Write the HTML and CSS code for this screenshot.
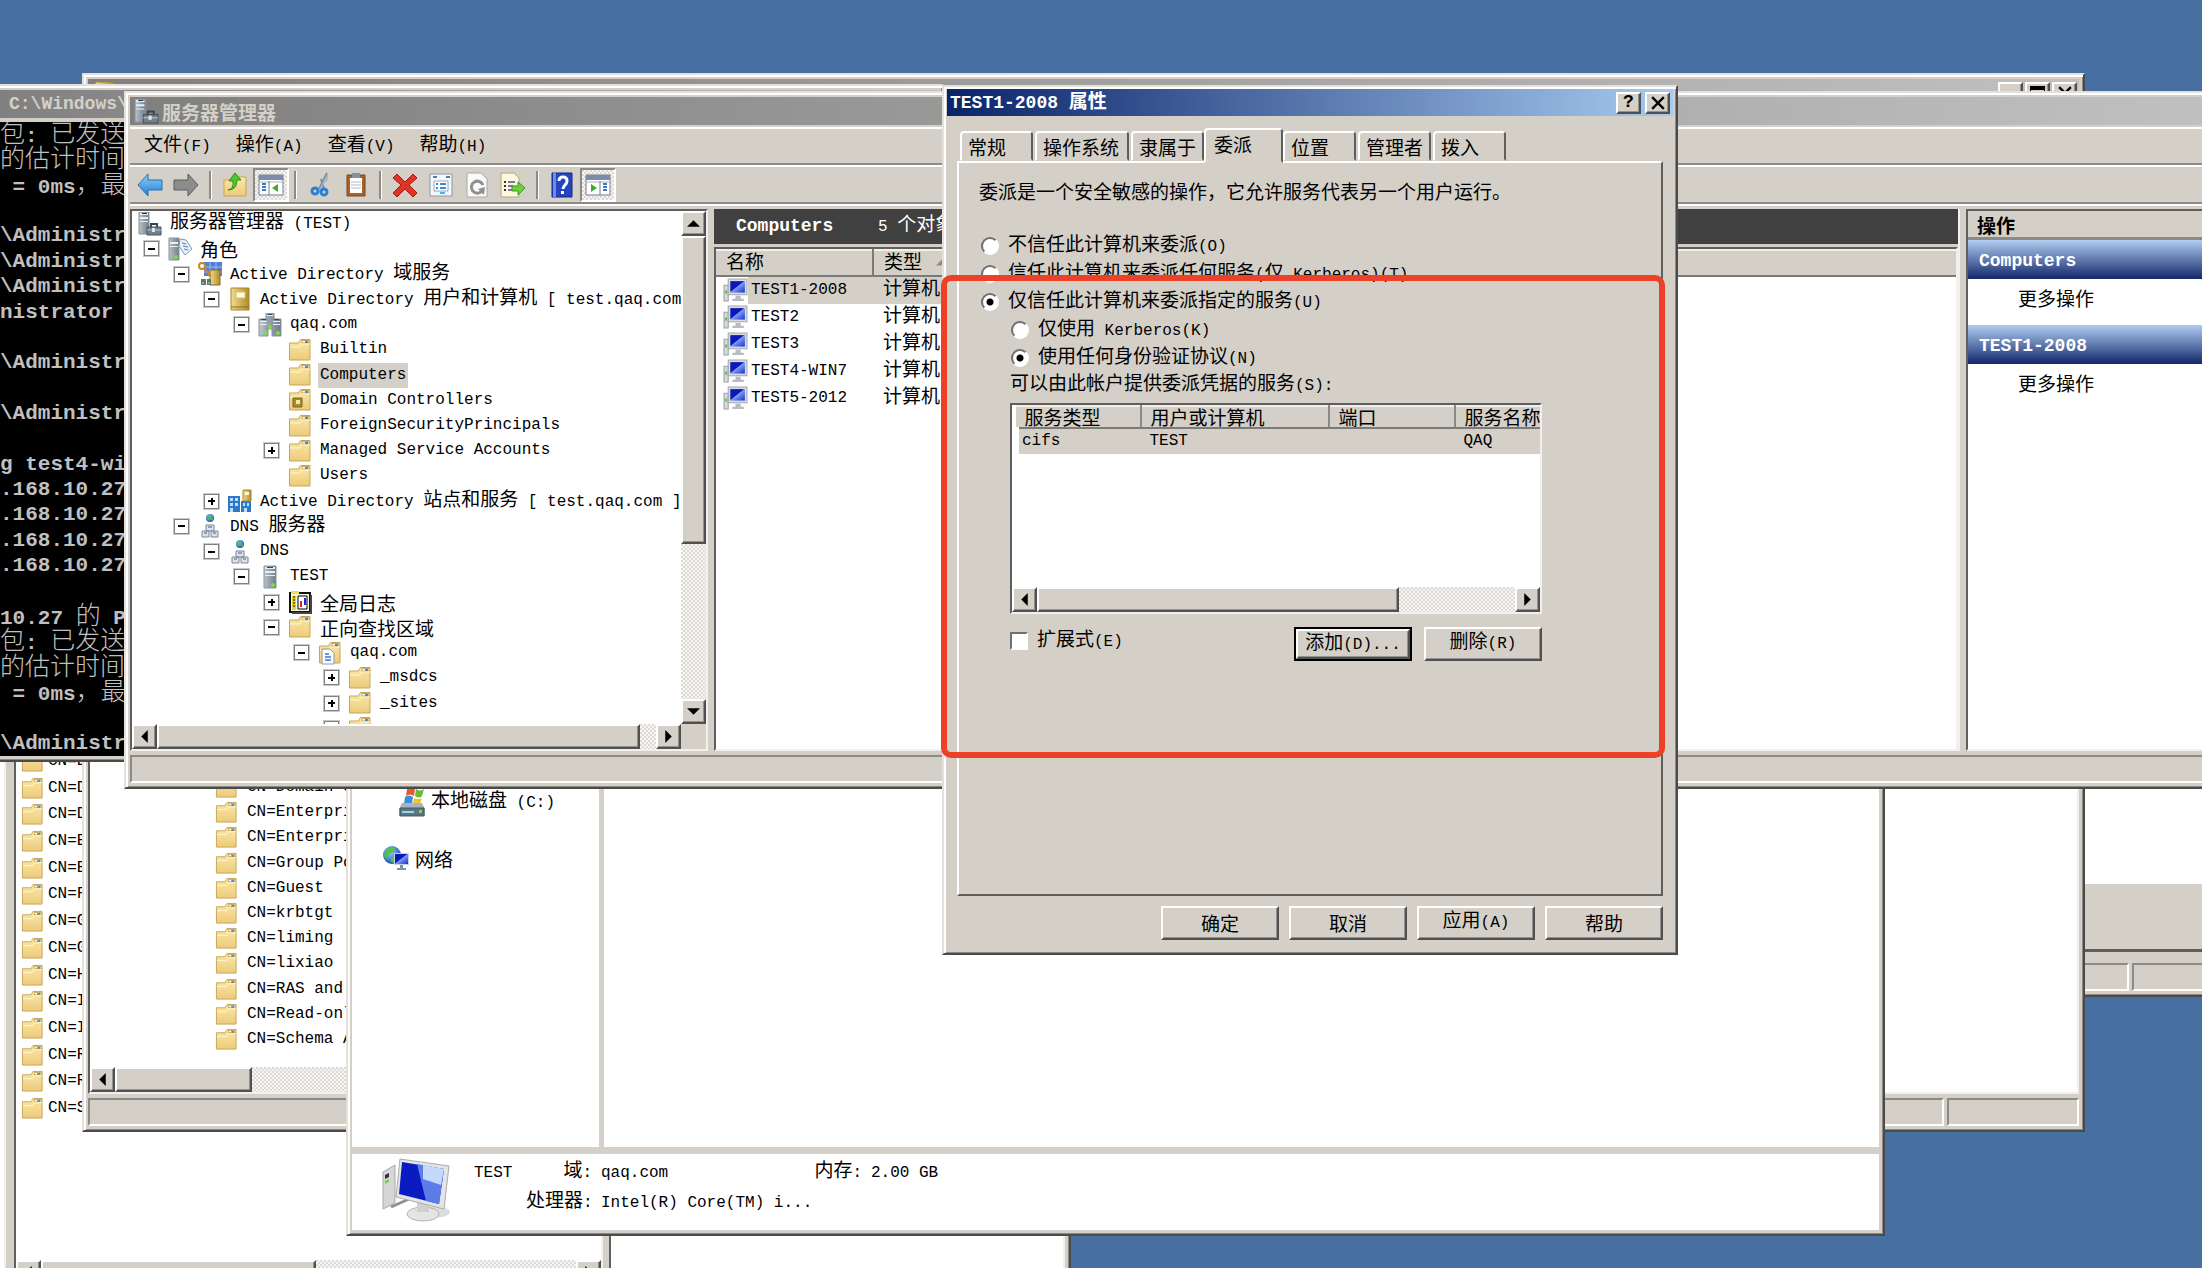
FILE: index.html
```html
<!DOCTYPE html>
<html lang="zh-CN">
<head>
    <meta charset="UTF-8">
    <meta name="viewport" content="width=device-width, initial-scale=1.0">
    <title>TEST1-2008 属性</title>
    <link rel="stylesheet" href="styles.css">
</head>
<body>
    <!-- icon set -->
    <svg class="defs" aria-hidden="true">
        <defs>
            <linearGradient id="gFolder" x1="0" y1="0" x2="0" y2="1"><stop offset="0" stop-color="#fbe8a8"/><stop offset="1" stop-color="#eccb7a"/></linearGradient>
            <linearGradient id="gServer" x1="0" y1="0" x2="1" y2="0"><stop offset="0" stop-color="#b9c4cc"/><stop offset="1" stop-color="#6f7d88"/></linearGradient>
            <linearGradient id="gScreen" x1="0" y1="0" x2="1" y2="1"><stop offset="0" stop-color="#0a18b8"/><stop offset=".45" stop-color="#0a18b8"/><stop offset=".5" stop-color="#7f9af0"/><stop offset="1" stop-color="#1230d0"/></linearGradient>
            <linearGradient id="gBlue" x1="0" y1="0" x2="0" y2="1"><stop offset="0" stop-color="#8fd0fa"/><stop offset="1" stop-color="#1f7fd4"/></linearGradient>
            <linearGradient id="gGold" x1="0" y1="0" x2="1" y2="0"><stop offset="0" stop-color="#f0dc90"/><stop offset="1" stop-color="#b08c28"/></linearGradient>
            <radialGradient id="gGlobe" cx=".4" cy=".35" r=".7"><stop offset="0" stop-color="#8fd0ff"/><stop offset="1" stop-color="#1448a8"/></radialGradient>
        </defs>
        <symbol id="folder" viewBox="0 0 24 24">
            <path d="M1.500 5h9l2-3.500h9.500v20.500h-20.500z" fill="url(#gFolder)" stroke="#c9a553"/>
            <path d="M14 2.500h7v2.500h-7z" fill="#fff" stroke="#c9a553"/><path d="M17 3h3v2h-3z" fill="#3f8fd8"/>
            <path d="M2 9h10l2-3h8" fill="none" stroke="#fff6d0"/>
        </symbol>
        <symbol id="folder-dc" viewBox="0 0 24 24">
            <use href="#folder"/><path d="M5 10h9v9h-9z" fill="#a88a30" stroke="#7c6418"/><path d="M8 12h4v4h-4z" fill="#f4e6a8"/>
        </symbol>
        <symbol id="folder-doc" viewBox="0 0 24 24">
            <use href="#folder"/><path d="M4 8h8l4 4v11h-12z" fill="#f8fbff" stroke="#8a9ab0"/><path d="M7 13h4M7 16h6M7 19h6" stroke="#3a78c8" stroke-width="1.500"/>
        </symbol>
        <symbol id="server" viewBox="0 0 24 24">
            <path d="M6 1h12v22h-12z" fill="url(#gServer)" stroke="#8a959e"/><path d="M7 2h10v2h-10zM7 6h10v2h-10zM7 10h10v1h-10z" fill="#e8eef2"/>
            <path d="M9 2h6v1h-6z" fill="#1c4a70"/><circle cx="15" cy="20" r="2" fill="#7be03a"/>
        </symbol>
        <symbol id="server-box" viewBox="0 0 24 24">
            <path d="M1 0h10v22h-10z" fill="url(#gServer)" stroke="#8a959e"/><path d="M2 1h8v2h-8zM2 5h8v2h-8zM2 9h8v1h-8z" fill="#e8eef2"/><path d="M4 1h5v1h-5z" fill="#1c3a60"/>
            <path d="M13 15v-3h6v3" fill="none" stroke="#3c4650" stroke-width="2"/><path d="M9 15h14v8h-14z" fill="#72808c" stroke="#49545e"/><path d="M9 18h14" stroke="#b8c4cc"/><path d="M14 16h3v4h-3z" fill="#dfe6ea"/>
        </symbol>
        <symbol id="roles" viewBox="0 0 24 24">
            <path d="M1 1h10v22h-10z" fill="url(#gServer)" stroke="#8a959e"/><path d="M2 5h8v2h-8zM2 9h8v1h-8z" fill="#e8eef2"/><circle cx="8" cy="20" r="2" fill="#7be03a"/>
            <path d="M12 2l6 1 6 9-7 6-6-9z" fill="#e8f1fa" stroke="#7d99b8"/><path d="M14 6l4 1M15 9l5 1M16 12l4 1" stroke="#4d7fb8"/>
        </symbol>
        <symbol id="adds" viewBox="0 0 24 24">
            <path d="M6 0h18v14h-18z" fill="#4f7fd8"/><path d="M6 5h18M6 10h18M12 0v14M18 0v14" stroke="#9dbdf2"/>
            <path d="M12 8h10v15h-10z" fill="url(#gGold)" stroke="#8c6c18"/><circle cx="4" cy="4" r="3" fill="none" stroke="#c88a20" stroke-width="2"/><path d="M6 6l7 8" stroke="#c88a20" stroke-width="2"/>
            <path d="M3 17h5v6h-5zM9 17h4v6h-4z" fill="#60707c"/><path d="M4 20h2v2h-2zM10 20h2v2h-2z" fill="#66d040"/>
        </symbol>
        <symbol id="book" viewBox="0 0 24 24">
            <path d="M3 1h18v22h-18z" fill="url(#gGold)" stroke="#a88428"/><path d="M8 5h9v6h-9z" fill="#fffbe0" stroke="#d8c070"/><path d="M3 20h18" stroke="#8c6c18"/>
        </symbol>
        <symbol id="domain" viewBox="0 0 24 24">
            <path d="M8 0h8v16h-8zM1 6h9v17h-9zM14 6h9v17h-9z" fill="url(#gServer)" stroke="#8a959e"/>
            <path d="M2 8h7v1h-7zM2 11h7v1h-7zM15 8h7v1h-7zM15 11h7v1h-7zM9 2h6v1h-6z" fill="#e8eef2"/><path d="M10 1h4v1h-4zM3 6h5v1h-5zM16 6h5v1h-5z" fill="#1c4a70"/>
            <circle cx="7" cy="20" r="2" fill="#7be03a"/><circle cx="20" cy="20" r="2" fill="#7be03a"/><circle cx="12" cy="14" r="2" fill="#7be03a"/>
        </symbol>
        <symbol id="sites" viewBox="0 0 24 24">
            <path d="M0 7h12v16h-12zM13 12h10v11h-10z" fill="#2d78cc"/><path d="M2 9h3v3h-3zM7 9h3v3h-3zM2 14h3v3h-3zM7 14h3v3h-3zM2 19h3v4h-3zM15 14h2v3h-2zM19 14h2v3h-2zM16 19h3v4h-3z" fill="#bfe0fa"/>
            <path d="M15 1h8v11h-8z" fill="url(#gGold)" stroke="#a88428"/><path d="M17 3h4v3h-4z" fill="#fff8d0"/>
        </symbol>
        <symbol id="dns" viewBox="0 0 24 24">
            <circle cx="12" cy="4" r="4" fill="url(#gGlobe)"/><path d="M9 2l3-1 1 3-3 2zM13 5l2-1v3z" fill="#4fc040"/>
            <path d="M8 11h8v6h-8zM4 17h7v6h-7zM13 17h7v6h-7z" fill="#dde2ea" stroke="#7c8698"/><path d="M10 13h4M6 19h3M15 19h3" stroke="#4a5a80"/>
        </symbol>
        <symbol id="log" viewBox="0 0 24 24">
            <path d="M2 3h20v19h-20z" fill="#f4f4e8" stroke="#111" stroke-width="2"/><path d="M3 1h8v3h-8z" fill="#f0e040"/><path d="M4 6h4v14h-4z" fill="#e8d820"/><path d="M5 7h2M5 10h2M5 13h2M5 16h2" stroke="#000"/>
            <path d="M10 6h9v13h-9z" fill="#fff" stroke="#000"/><path d="M12 11h2v6h-2z" fill="#e02020"/><path d="M16 8h2v7h-2z" fill="#2020e0"/><path d="M23 5v18h-19" fill="none" stroke="#444" stroke-width="2"/>
        </symbol>
        <symbol id="pc" viewBox="0 0 24 24">
            <path d="M1 7h4v15h-4z" fill="#d8dce0" stroke="#9aa0a6"/><path d="M2 12h2v3h-2z" fill="#58c830"/>
            <path d="M5 1h18v15h-18z" fill="#d8dce0" stroke="#a4a8ae"/><path d="M7 3h14v11h-14z" fill="url(#gScreen)"/><path d="M12 17h5v3h3v2h-11v-2h3z" fill="#b8bcc2"/>
        </symbol>
        <symbol id="disk" viewBox="0 0 26 32">
            <path d="M8 3q4-3 8 0l-1 7q-4-3-8 0z" fill="#e8582c"/><path d="M17 3q4 3 8 0l-2 7q-3 3-7 0z" fill="#6cb83c"/><path d="M6 11q4-3 8 0l-1 7q-4-2-8 0z" fill="#3c8ce0"/><path d="M15 12q4 2 8 0l-2 6q-4 2-7 0z" fill="#f4c030"/>
            <path d="M3 17h20l3 6v7h-26v-7z" fill="#a8b4bc"/><path d="M1 22h24v8h-24z" fill="#5c7480" stroke="#485860"/><path d="M3 25h12v2h-12z" fill="#90dcf0"/><path d="M20 24h3v3h-3z" fill="#70e040"/>
        </symbol>
        <symbol id="network" viewBox="0 0 26 26">
            <circle cx="9" cy="10" r="9" fill="url(#gGlobe)"/><path d="M3 5q5-5 9-2l-3 5-4 2-1 4-3-3zM8 13l5-1-2 6-3-1z" fill="#58c048"/>
            <path d="M11 8h15v12h-15z" fill="#c8d0dc"/><path d="M12 9h13v10h-13z" fill="url(#gScreen)"/><path d="M17 20h3v3h3v2h-9v-2h3z" fill="#7c90b0"/>
        </symbol>
        <symbol id="bigpc" viewBox="0 0 70 64">
            <ellipse cx="52" cy="54" rx="17" ry="6" fill="#dcdcdc"/><path d="M2 14l12-7v38l-12 6z" fill="#d4d6d8" stroke="#a8a8a8"/><path d="M4 17l4-2v4l-4 2z" fill="#333"/><path d="M4 23l4-2v3l-4 2z" fill="#6cd83c"/><path d="M10 49l18-8" stroke="#909090" stroke-width="3"/>
            <ellipse cx="42" cy="56" rx="16" ry="7" fill="#e4e4e4" stroke="#b4b4b4"/><path d="M36 42h12v12h-12z" fill="#d0d0d0"/>
            <path d="M19 1l49 7-5 43-48-12z" fill="#e2e4e6" stroke="#acacac"/><path d="M21 4l42 7-5 35-40-10z" fill="#0a1cc0"/><path d="M36 6l27 5-5 35-13-3z" fill="#5c7ce8"/><path d="M42 7l21 4-3 16-18-6z" fill="#c4d8fc"/>
        </symbol>
        <symbol id="back" viewBox="0 0 26 26"><path d="M1 13l10-11v6h14v10h-14v6z" fill="url(#gBlue)" stroke="#2a6cb0"/></symbol>
        <symbol id="forward" viewBox="0 0 26 26"><path d="M25 13l-10-11v6h-14v10h14v6z" fill="#8c8c8c" stroke="#5c5c5c"/></symbol>
        <symbol id="up" viewBox="0 0 26 26"><path d="M2 8h9l2-3h11v19h-22z" fill="url(#gFolder)" stroke="#c9a553"/><path d="M6 18q6-1 5-9h-4l6-8 6 7h-4q0 10-9 10z" fill="#4cc830" stroke="#2c8c1c"/></symbol>
        <symbol id="pane-left" viewBox="0 0 26 26"><path d="M1 3h24v20h-24z" fill="#fff" stroke="#707c90"/><path d="M1 3h24v5h-24z" fill="#7c8cac"/><path d="M2 10h23" stroke="#a8b4c8"/><path d="M11 9v14" stroke="#707c90"/><path d="M4 12h4M4 15h4M4 18h4" stroke="#3c78c0" stroke-width="2"/><path d="M20 12v8l-6-4z" fill="#3cac28"/></symbol>
        <symbol id="pane-right" viewBox="0 0 26 26"><path d="M1 3h24v20h-24z" fill="#fff" stroke="#707c90"/><path d="M1 3h24v5h-24z" fill="#7c8cac"/><path d="M2 10h23" stroke="#a8b4c8"/><path d="M15 9v14" stroke="#707c90"/><path d="M18 12h4M18 15h4M18 18h4" stroke="#3c78c0" stroke-width="2"/><path d="M6 12v8l6-4z" fill="#3cac28"/></symbol>
        <symbol id="cut" viewBox="0 0 26 26"><path d="M20 1l-8 16M14 7l3 10" stroke="#7890a4" stroke-width="2"/><path d="M21 1v7l-8 8z" fill="#a8bccc"/><circle cx="8" cy="19" r="3" fill="none" stroke="#2a80d8" stroke-width="3"/><circle cx="17" cy="20" r="3" fill="none" stroke="#2a80d8" stroke-width="3"/></symbol>
        <symbol id="paste" viewBox="0 0 26 26"><path d="M4 3h18v21h-18z" fill="#a4622c" stroke="#7c441c"/><path d="M7 6h12v15h-12z" fill="#fff"/><path d="M9 1h8v5h-8z" fill="#889098"/><path d="M8 10h10M8 13h10M8 16h10" stroke="#b4bcc8"/></symbol>
        <symbol id="delete" viewBox="0 0 26 26"><path d="M5 2l8 8 8-8 4 4-8 7 8 8-4 4-8-8-8 8-4-4 8-8-8-7z" fill="#e03428" stroke="#a81810"/></symbol>
        <symbol id="props" viewBox="0 0 26 26"><path d="M2 2h22v22h-22z" fill="#f4f8fc" stroke="#8898a8"/><path d="M5 5h4M18 5h4" stroke="#4c7cb0" stroke-width="2"/><path d="M6 9h14v10h-14z" fill="#fff" stroke="#98a8b8"/><path d="M8 12h2M12 12h6M8 16h2M12 16h6" stroke="#3c88d0" stroke-width="2"/><path d="M12 21h5" stroke="#40b8e8" stroke-width="2"/></symbol>
        <symbol id="refresh" viewBox="0 0 26 26"><path d="M3 1h14l6 6v18h-20z" fill="#fafafa" stroke="#a8a8a8"/><path d="M18 19a6 6 0 1 1 1-6" fill="none" stroke="#909090" stroke-width="3"/><path d="M14 17l7-2-1 8z" fill="#909090"/></symbol>
        <symbol id="export" viewBox="0 0 26 26"><path d="M1 1h13l5 5v19h-18z" fill="#fcf8dc" stroke="#b0a878"/><path d="M4 10h2M4 14h2M4 18h2" stroke="#333" stroke-width="2"/><path d="M8 10h7M8 14h5M8 18h5" stroke="#7878a0" stroke-width="2"/><path d="M12 14h6v-4l7 6-7 7v-4h-6z" fill="#6cd040" stroke="#3c9820"/></symbol>
        <symbol id="help" viewBox="0 0 26 26"><path d="M3 1h20v24h-20z" fill="#2444c4" stroke="#14287c"/><path d="M4 1h3v24h-3z" fill="#6c8cf0"/><path d="M10 9q0-4 4-4t4 4q0 2-2 4t-2 4" fill="none" stroke="#fff" stroke-width="3"/><path d="M12 19h3v3h-3z" fill="#fff"/></symbol>
        <symbol id="tri-left" viewBox="0 0 12 12"><path d="M9 0v12l-6-6z"/></symbol>
        <symbol id="tri-right" viewBox="0 0 12 12"><path d="M3 0v12l6-6z"/></symbol>
        <symbol id="tri-up" viewBox="0 0 12 12"><path d="M0 9h12l-6-6z"/></symbol>
        <symbol id="tri-down" viewBox="0 0 12 12"><path d="M0 3h12l-6 6z"/></symbol>
        <symbol id="cross" viewBox="0 0 12 12"><path d="M1 1l10 10M11 1l-10 10" stroke="#000" stroke-width="2"/></symbol>
    </svg>

    <main class="desktop">
        <!-- attribute editor, bottom of the stack -->
        <section class="window adsi-list">
            <div class="pane side"></div>
            <div class="pane mid">
                <ul class="entries wide">
                    <li><svg><use href="#folder"/></svg>CN=D</li>
                    <li><svg><use href="#folder"/></svg>CN=D</li>
                    <li><svg><use href="#folder"/></svg>CN=D</li>
                    <li><svg><use href="#folder"/></svg>CN=E</li>
                    <li><svg><use href="#folder"/></svg>CN=E</li>
                    <li><svg><use href="#folder"/></svg>CN=F</li>
                    <li><svg><use href="#folder"/></svg>CN=G</li>
                    <li><svg><use href="#folder"/></svg>CN=G</li>
                    <li><svg><use href="#folder"/></svg>CN=H</li>
                    <li><svg><use href="#folder"/></svg>CN=I</li>
                    <li><svg><use href="#folder"/></svg>CN=I</li>
                    <li><svg><use href="#folder"/></svg>CN=R</li>
                    <li><svg><use href="#folder"/></svg>CN=R</li>
                    <li><svg><use href="#folder"/></svg>CN=S</li>
                </ul>
                <div class="hscroll">
                    <button type="button" class="arrow" aria-label="向左"><svg><use href="#tri-left"/></svg></button>
                    <div class="thumb w-mid"></div>
                    <div class="track"></div>
                    <button type="button" class="arrow" aria-label="向右"><svg><use href="#tri-right"/></svg></button>
                </div>
            </div>
            <div class="pane rest"></div>
        </section>

        <section class="window policy">
            <div class="blank"></div>
            <div class="strip"></div>
            <div class="status"><span class="cell grow"></span><span class="cell tail"></span></div>
        </section>

        <section class="window adsi-tree">
            <div class="titlebar">
                <svg class="ticon"><use href="#book"/></svg>
                <div class="controls">
                    <button type="button" aria-label="最小化"></button>
                    <button type="button" aria-label="最大化"><i class="max"></i></button>
                    <button type="button" aria-label="关闭"><svg><use href="#cross"/></svg></button>
                </div>
            </div>
            <div class="pane body">
                <ul class="entries">
                    <li><svg><use href="#folder"/></svg>CN=Domain Users</li>
                    <li><svg><use href="#folder"/></svg>CN=Enterprise Admins</li>
                    <li><svg><use href="#folder"/></svg>CN=Enterprise Read</li>
                    <li><svg><use href="#folder"/></svg>CN=Group Policy</li>
                    <li><svg><use href="#folder"/></svg>CN=Guest</li>
                    <li><svg><use href="#folder"/></svg>CN=krbtgt</li>
                    <li><svg><use href="#folder"/></svg>CN=liming</li>
                    <li><svg><use href="#folder"/></svg>CN=lixiao</li>
                    <li><svg><use href="#folder"/></svg>CN=RAS and IAS</li>
                    <li><svg><use href="#folder"/></svg>CN=Read-only</li>
                    <li><svg><use href="#folder"/></svg>CN=Schema Admins</li>
                </ul>
                <div class="hscroll short">
                    <button type="button" class="arrow" aria-label="向左"><svg><use href="#tri-left"/></svg></button>
                    <div class="thumb w-small"></div>
                    <div class="track"></div>
                </div>
            </div>
            <div class="status"><span class="cell grow"></span><span class="cell last"></span></div>
        </section>

        <section class="window console">
            <div class="titlebar">C:\Windows\</div>
            <div class="screen">
                <div><span class="zh">包</span>: <span class="zh">已发送</span></div>
                <div><span class="zh">的估计时间</span></div>
                <div> = 0ms<span class="zh">，最</span></div>
                <div></div>
                <div>\Administr</div>
                <div>\Administr</div>
                <div>\Administr</div>
                <div>nistrator</div>
                <div></div>
                <div>\Administr</div>
                <div></div>
                <div>\Administr</div>
                <div></div>
                <div>g test4-wi</div>
                <div>.168.10.27</div>
                <div>.168.10.27</div>
                <div>.168.10.27</div>
                <div>.168.10.27</div>
                <div></div>
                <div>10.27 <span class="zh">的</span> P</div>
                <div><span class="zh">包</span>: <span class="zh">已发送</span></div>
                <div><span class="zh">的估计时间</span></div>
                <div> = 0ms<span class="zh">，最</span></div>
                <div></div>
                <div>\Administr</div>
            </div>
        </section>

        <section class="window explorer">
            <div class="split">
                <ul class="places">
                    <li class="sub"><svg class="disk"><use href="#disk"/></svg><span><span class="zh">本地磁盘</span> (C:)</span></li>
                    <li><svg class="net"><use href="#network"/></svg><span class="zh">网络</span></li>
                </ul>
                <div class="files"></div>
            </div>
            <div class="details">
                <svg class="bigpc"><use href="#bigpc"/></svg>
                <strong>TEST</strong>
                <dl>
                    <dt><span class="zh">域</span>:</dt><dd>qaq.com</dd>
                    <dt><span class="zh">内存</span>:</dt><dd>2.00 GB</dd>
                    <dt><span class="zh">处理器</span>:</dt><dd>Intel(R) Core(TM) i...</dd>
                </dl>
            </div>
        </section>

        <section class="window manager">
            <div class="titlebar"><svg class="ticon"><use href="#server-box"/></svg><span class="zh">服务器管理器</span></div>
            <nav class="menubar">
                <button type="button"><span class="zh">文件</span>(F)</button>
                <button type="button"><span class="zh">操作</span>(A)</button>
                <button type="button"><span class="zh">查看</span>(V)</button>
                <button type="button"><span class="zh">帮助</span>(H)</button>
            </nav>
            <div class="toolbar">
                <button type="button" aria-label="后退"><svg><use href="#back"/></svg></button>
                <button type="button" aria-label="前进"><svg><use href="#forward"/></svg></button>
                <i class="sep"></i>
                <button type="button" aria-label="上一级"><svg><use href="#up"/></svg></button>
                <button type="button" class="pressed" aria-label="显示控制台树"><svg><use href="#pane-left"/></svg></button>
                <i class="sep"></i>
                <button type="button" aria-label="剪切"><svg><use href="#cut"/></svg></button>
                <button type="button" aria-label="粘贴"><svg><use href="#paste"/></svg></button>
                <i class="sep"></i>
                <button type="button" aria-label="删除"><svg><use href="#delete"/></svg></button>
                <button type="button" aria-label="属性"><svg><use href="#props"/></svg></button>
                <button type="button" aria-label="刷新"><svg><use href="#refresh"/></svg></button>
                <button type="button" aria-label="导出列表"><svg><use href="#export"/></svg></button>
                <i class="sep"></i>
                <button type="button" aria-label="帮助"><svg><use href="#help"/></svg></button>
                <button type="button" class="pressed" aria-label="显示操作窗格"><svg><use href="#pane-right"/></svg></button>
            </div>
            <div class="panes">
                <div class="pane tree-pane">
                    <div class="tree-main">
                        <ul class="tree">
                            <li class="lv0"><svg><use href="#server-box"/></svg><span><span class="zh">服务器管理器</span> (TEST)</span></li>
                            <li class="lv1"><i class="box"></i><svg><use href="#roles"/></svg><span class="zh">角色</span></li>
                            <li class="lv2"><i class="box"></i><svg><use href="#adds"/></svg><span>Active Directory <span class="zh">域服务</span></span></li>
                            <li class="lv3"><i class="box"></i><svg><use href="#book"/></svg><span>Active Directory <span class="zh">用户和计算机</span> [ test.qaq.com</span></li>
                            <li class="lv4"><i class="box"></i><svg><use href="#domain"/></svg><span>qaq.com</span></li>
                            <li class="lv5"><i class="nobox"></i><svg><use href="#folder"/></svg><span>Builtin</span></li>
                            <li class="lv5"><i class="nobox"></i><svg><use href="#folder"/></svg><span class="current">Computers</span></li>
                            <li class="lv5"><i class="nobox"></i><svg><use href="#folder-dc"/></svg><span>Domain Controllers</span></li>
                            <li class="lv5"><i class="nobox"></i><svg><use href="#folder"/></svg><span>ForeignSecurityPrincipals</span></li>
                            <li class="lv5"><i class="box plus"></i><svg><use href="#folder"/></svg><span>Managed Service Accounts</span></li>
                            <li class="lv5"><i class="nobox"></i><svg><use href="#folder"/></svg><span>Users</span></li>
                            <li class="lv3"><i class="box plus"></i><svg><use href="#sites"/></svg><span>Active Directory <span class="zh">站点和服务</span> [ test.qaq.com ]</span></li>
                            <li class="lv2"><i class="box"></i><svg><use href="#dns"/></svg><span>DNS <span class="zh">服务器</span></span></li>
                            <li class="lv3"><i class="box"></i><svg><use href="#dns"/></svg><span>DNS</span></li>
                            <li class="lv4"><i class="box"></i><svg><use href="#server"/></svg><span>TEST</span></li>
                            <li class="lv5"><i class="box plus"></i><svg><use href="#log"/></svg><span class="zh">全局日志</span></li>
                            <li class="lv5"><i class="box"></i><svg><use href="#folder"/></svg><span class="zh">正向查找区域</span></li>
                            <li class="lv6"><i class="box"></i><svg><use href="#folder-doc"/></svg><span>qaq.com</span></li>
                            <li class="lv7"><i class="box plus"></i><svg><use href="#folder"/></svg><span>_msdcs</span></li>
                            <li class="lv7"><i class="box plus"></i><svg><use href="#folder"/></svg><span>_sites</span></li>
                            <li class="lv7"><i class="box plus"></i><svg><use href="#folder"/></svg></li>
                        </ul>
                        <div class="vscroll">
                            <button type="button" class="arrow" aria-label="向上"><svg><use href="#tri-up"/></svg></button>
                            <div class="thumb"></div>
                            <div class="track"></div>
                            <button type="button" class="arrow" aria-label="向下"><svg><use href="#tri-down"/></svg></button>
                        </div>
                    </div>
                    <div class="hscroll corner">
                        <button type="button" class="arrow" aria-label="向左"><svg><use href="#tri-left"/></svg></button>
                        <div class="thumb grow"></div>
                        <div class="track gap"></div>
                        <button type="button" class="arrow" aria-label="向右"><svg><use href="#tri-right"/></svg></button>
                    </div>
                </div>

                <div class="results">
                    <header><strong>Computers</strong><span>5 <span class="zh">个对象</span></span></header>
                    <div class="pane">
                        <table class="computers">
                            <thead><tr><th class="name"><span class="zh">名称</span></th><th class="type"><span class="zh">类型</span><svg><use href="#tri-up"/></svg></th><th></th></tr></thead>
                            <tbody>
                                <tr class="selected"><td><div><svg><use href="#pc"/></svg><span>TEST1-2008</span></div></td><td><span class="zh">计算机</span></td><td></td></tr>
                                <tr><td><div><svg><use href="#pc"/></svg><span>TEST2</span></div></td><td><span class="zh">计算机</span></td><td></td></tr>
                                <tr><td><div><svg><use href="#pc"/></svg><span>TEST3</span></div></td><td><span class="zh">计算机</span></td><td></td></tr>
                                <tr><td><div><svg><use href="#pc"/></svg><span>TEST4-WIN7</span></div></td><td><span class="zh">计算机</span></td><td></td></tr>
                                <tr><td><div><svg><use href="#pc"/></svg><span>TEST5-2012</span></div></td><td><span class="zh">计算机</span></td><td></td></tr>
                            </tbody>
                        </table>
                    </div>
                </div>

                <aside class="pane actions">
                    <h2 class="zh">操作</h2>
                    <h3>Computers</h3>
                    <a href="#" class="zh">更多操作</a>
                    <h3>TEST1-2008</h3>
                    <a href="#" class="zh">更多操作</a>
                </aside>
            </div>
            <div class="status"><span class="cell grow"></span></div>
        </section>

        <section class="window dialog" role="dialog" aria-labelledby="dlgTitle">
            <div class="titlebar active">
                <span id="dlgTitle">TEST1-2008 <span class="zh">属性</span></span>
                <div class="controls">
                    <button type="button">?</button>
                    <button type="button" aria-label="关闭"><svg><use href="#cross"/></svg></button>
                </div>
            </div>
            <div class="tabs" role="tablist">
                <button type="button" role="tab" class="tab zh">常规</button>
                <button type="button" role="tab" class="tab zh long">操作系统</button>
                <button type="button" role="tab" class="tab zh">隶属于</button>
                <button type="button" role="tab" class="tab zh on" aria-selected="true">委派</button>
                <button type="button" role="tab" class="tab zh">位置</button>
                <button type="button" role="tab" class="tab zh">管理者</button>
                <button type="button" role="tab" class="tab zh">拨入</button>
            </div>
            <form class="sheet">
                <p class="zh">委派是一个安全敏感的操作，它允许服务代表另一个用户运行。</p>
                <div class="radios">
                    <label><input type="radio" name="trust"><span><span class="zh">不信任此计算机来委派</span>(O)</span></label>
                    <label><input type="radio" name="trust"><span><span class="zh">信任此计算机来委派任何服务</span>(<span class="zh">仅</span> Kerberos)(T)</span></label>
                    <label><input type="radio" name="trust" checked><span><span class="zh">仅信任此计算机来委派指定的服务</span>(U)</span></label>
                    <label class="sub"><input type="radio" name="proto"><span><span class="zh">仅使用</span> Kerberos(K)</span></label>
                    <label class="sub"><input type="radio" name="proto" checked><span><span class="zh">使用任何身份验证协议</span>(N)</span></label>
                </div>
                <div class="services">
                    <p id="svcLabel"><span class="zh">可以由此帐户提供委派凭据的服务</span>(S):</p>
                    <div class="pane listbox">
                        <table aria-labelledby="svcLabel">
                            <thead><tr class="zh"><th class="c1">服务类型</th><th class="c2">用户或计算机</th><th class="c3">端口</th><th>服务名称</th></tr></thead>
                            <tbody><tr><td>cifs</td><td>TEST</td><td></td><td>QAQ</td></tr></tbody>
                        </table>
                        <div class="hscroll">
                            <button type="button" class="arrow" aria-label="向左"><svg><use href="#tri-left"/></svg></button>
                            <div class="thumb w-list"></div>
                            <div class="track"></div>
                            <button type="button" class="arrow" aria-label="向右"><svg><use href="#tri-right"/></svg></button>
                        </div>
                    </div>
                    <div class="row">
                        <label><input type="checkbox"><span><span class="zh">扩展式</span>(E)</span></label>
                        <button type="button" class="btn default"><span class="zh">添加</span>(D)...</button>
                        <button type="button" class="btn"><span class="zh">删除</span>(R)</button>
                    </div>
                </div>
            </form>
            <div class="footer">
                <button type="button" class="btn zh">确定</button>
                <button type="button" class="btn zh">取消</button>
                <button type="button" class="btn"><span class="zh">应用</span>(A)</button>
                <button type="button" class="btn zh">帮助</button>
            </div>
            <div class="highlight"></div>
        </section>
    </main>
</body>
</html>
```
FILE: styles.css
```css
* {
    box-sizing: border-box;
}

body {
    margin: 0;
    color: #000;
    font-family: "Liberation Mono", "Noto Sans CJK SC", monospace;
    font-size: 16px;
    line-height: 25px;
}

ul, dl, dd, p, h2, h3 {
    margin: 0;
    padding: 0;
    list-style: none;
}

button {
    font: inherit;
    color: inherit;
    padding: 0;
    border: none;
    background: none;
}

svg {
    flex: none;
}

.defs {
    position: absolute;
    width: 0;
    height: 0;
}

/* chinese glyphs are two latin cells wide */
.zh {
    font-family: "Noto Sans CJK SC", sans-serif;
    font-size: 19px;
}

span.zh {
    line-height: 19px;
}

.desktop {
    position: relative;
    height: 100vh;
    overflow: hidden;
    background: #486fa1;
}

/* ---- window frame ---- */
.window {
    position: absolute;
    display: flex;
    flex-direction: column;
    padding: 4px;
    border: 2px solid;
    border-color: #e4e1da #4a4a4a #4a4a4a #e4e1da;
    box-shadow: inset 2px 2px #fff, inset -1px -1px #8c8a86;
    background: #d4d0c8;
    white-space: nowrap;
}

.titlebar {
    display: flex;
    flex: none;
    align-items: center;
    height: 28px;
    color: #d4d0c8;
    font-size: 18px;
    font-weight: bold;
    background: linear-gradient(90deg, #808080, #c0c0c0);
}

.titlebar.active {
    height: 27px;
    padding: 0 3px;
    color: #fff;
    background: linear-gradient(90deg, #0a246a, #a6caf0);
}

.ticon {
    width: 25px;
    height: 25px;
    margin: 0 3px 0 4px;
}

.controls {
    display: flex;
    gap: 4px;
    margin-left: auto;
}

.controls button {
    display: flex;
    align-items: center;
    justify-content: center;
    width: 25px;
    height: 22px;
    color: #000;
}

.controls svg {
    width: 14px;
    height: 14px;
}

.controls .max {
    width: 15px;
    height: 14px;
    border: 1px solid #000;
    border-top-width: 4px;
}

.pane {
    display: flex;
    flex-direction: column;
    min-width: 0;
    border: 2px solid;
    border-color: #5e5e5e #f2f0ec #f2f0ec #5e5e5e;
    background: #fff;
    overflow: hidden;
}

.btn, .arrow, .thumb, .controls button {
    border: 2px solid;
    border-color: #fff #505050 #505050 #fff;
    box-shadow: inset -1px -1px #94928e;
    background: #d4d0c8;
}

/* ---- scrollbars ---- */
.hscroll, .vscroll {
    display: flex;
    flex: none;
}

.hscroll {
    height: 25px;
}

.hscroll.corner {
    padding-right: 25px;
    background: #d4d0c8;
}

.hscroll.short {
    width: 400px;
}

.vscroll {
    flex-direction: column;
    width: 25px;
}

.arrow {
    display: flex;
    flex: none;
    align-items: center;
    justify-content: center;
    width: 25px;
    height: 25px;
}

.arrow svg {
    width: 13px;
    height: 13px;
}

.track {
    flex: 1;
    background: repeating-conic-gradient(#f6f5f3 0 25%, #dedbd5 0 50%) 0 0 / 4px 4px;
}

.vscroll .thumb {
    height: 308px;
}

.thumb.grow {
    flex: 1;
}

.track.gap {
    flex: none;
    width: 16px;
}

.w-small {
    width: 137px;
}

.w-mid {
    width: 275px;
}

.w-list {
    width: 362px;
}

/* ---- status bars ---- */
.status {
    display: flex;
    flex: none;
    gap: 3px;
    height: 28px;
    margin-top: 4px;
}

.cell {
    border: 2px solid;
    border-color: #8c8a86 #fff #fff #8c8a86;
}

.cell.grow {
    flex: 1;
}

.cell.last {
    width: 132px;
}

.cell.tail {
    width: 74px;
}

/* ---- folder lists ---- */
.entries {
    display: grid;
    height: 277px;
    margin-top: auto;
    margin-bottom: 15px;
    padding-left: 125px;
    grid-auto-rows: minmax(0, 1fr);
}

.entries li {
    display: flex;
    align-items: center;
    gap: 9px;
}

.entries svg {
    width: 23px;
    height: 23px;
}

.entries.wide {
    height: 374px;
    margin: 0 0 138px;
    padding-left: 5px;
}

.entries.wide li {
    gap: 4px;
}

.adsi-list {
    flex-direction: row;
    left: -10px;
    top: 740px;
    width: 1081px;
    height: 600px;
}

.adsi-list .side {
    width: 10px;
    margin-right: 8px;
}

.adsi-list .mid {
    width: 589px;
    margin-right: 6px;
}

.adsi-list .rest {
    flex: 1;
}

.adsi-tree {
    left: 82px;
    top: 73px;
    width: 2003px;
    height: 1059px;
}

.adsi-tree .titlebar {
    padding-right: 2px;
}

.adsi-tree .controls {
    gap: 2px;
}

.adsi-tree .body {
    flex: 1;
}

.policy {
    left: 1500px;
    right: -10px;
    top: 760px;
    height: 237px;
}

.policy .blank {
    flex: 1;
    background: #fff;
}

.policy .strip {
    height: 70px;
    border-top: 2px solid #fff;
    border-bottom: 3px solid #5e5e5e;
}

.policy .status {
    margin-top: 11px;
}

/* ---- command prompt ---- */
.console {
    left: -6px;
    top: 84px;
    width: 950px;
    height: 678px;
}

.console .titlebar {
    padding-left: 9px;
}

.screen {
    display: grid;
    flex: 1;
    grid-auto-rows: minmax(0, 1fr);
    margin-top: 4px;
    color: #c0c0c0;
    background: #000;
    font-size: 21px;
    font-weight: bold;
    white-space: pre;
    overflow: hidden;
}

.screen .zh {
    font-size: 25px;
    font-weight: 300;
}

/* ---- explorer ---- */
.explorer {
    left: 346px;
    top: 760px;
    width: 1539px;
    height: 476px;
}

.split {
    display: flex;
    flex: 1;
    gap: 5px;
    margin-bottom: 7px;
}

.places {
    display: flex;
    flex-direction: column;
    gap: 24px;
    width: 247px;
    padding: 20px 0 0 31px;
    background: #fff;
}

.places li {
    display: flex;
    align-items: center;
    gap: 6px;
    height: 32px;
}

.places .sub {
    padding-left: 16px;
}

.disk {
    width: 26px;
    height: 32px;
}

.net {
    width: 26px;
    height: 26px;
}

.files {
    flex: 1;
    background: #fff;
}

.details {
    display: flex;
    height: 76px;
    padding: 4px 28px;
    background: #fff;
}

.bigpc {
    width: 72px;
    height: 64px;
    margin-right: 22px;
}

.details strong {
    width: 52px;
    font-weight: normal;
    line-height: 30px;
}

.details dl {
    display: grid;
    grid-template-columns: 66px 199px 53px 200px;
    column-gap: 9px;
    grid-auto-rows: 30px;
    line-height: 30px;
}

.details dt {
    text-align: right;
}

/* ---- server manager ---- */
.manager {
    left: 124px;
    right: -10px;
    top: 91px;
    height: 698px;
}

.menubar {
    display: flex;
    flex: none;
    gap: 25px;
    height: 38px;
    margin-top: 2px;
    padding-left: 14px;
    border-top: 2px solid #fff;
    border-bottom: 2px solid #8c8a86;
}

.toolbar {
    display: flex;
    flex: none;
    align-items: center;
    height: 39px;
    padding-left: 2px;
    border-top: 2px solid #fff;
    border-bottom: 2px solid #8c8a86;
}

.toolbar button {
    display: flex;
    align-items: center;
    justify-content: center;
    width: 36px;
    height: 34px;
}

.toolbar svg {
    width: 26px;
    height: 26px;
}

.toolbar .pressed {
    border: 2px solid;
    border-color: #8c8a86 #fff #fff #8c8a86;
    background: repeating-conic-gradient(#f6f5f3 0 25%, #dedbd5 0 50%) 0 0 / 4px 4px;
}

.sep {
    width: 3px;
    height: 28px;
    margin: 0 5px;
    border-left: 2px solid #8c8a86;
    border-right: 1px solid #fff;
}

.panes {
    display: flex;
    flex: 1;
    gap: 6px;
    min-height: 0;
    padding-top: 3px;
    border-top: 2px solid #fff;
}

.tree-pane {
    width: 578px;
}

.tree-main {
    display: flex;
    flex: 1;
    min-height: 0;
}

.tree {
    display: grid;
    flex: 1;
    height: 530px;
    min-width: 0;
    grid-auto-rows: minmax(0, 1fr);
}

.tree-main, .tree {
    overflow: hidden;
}

.tree li {
    display: flex;
    align-items: center;
    min-height: 0;
}

.tree svg {
    width: 24px;
    height: 24px;
    margin-right: 8px;
}

.box, .nobox {
    flex: none;
    width: 15px;
    height: 15px;
    margin-right: 9px;
}

.box {
    border: 1px solid #808080;
    outline: 1px solid #c8c8c8;
    background: linear-gradient(#000, #000) center / 7px 2px no-repeat;
}

.box.plus {
    background: linear-gradient(#000, #000) center / 7px 2px no-repeat, linear-gradient(#000, #000) center / 2px 7px no-repeat;
}

.tree .lv0 { padding-left: 6px; }
.tree .lv1 { padding-left: 12px; }
.tree .lv2 { padding-left: 42px; }
.tree .lv3 { padding-left: 72px; }
.tree .lv4 { padding-left: 102px; }
.tree .lv5 { padding-left: 132px; }
.tree .lv6 { padding-left: 162px; }
.tree .lv7 { padding-left: 192px; }

.current {
    margin-left: -2px;
    padding: 0 2px;
    background: #d4d0c8;
}

.results {
    display: flex;
    flex: 1;
    flex-direction: column;
    border-right: 2px solid #f2f0ec;
}

.results header {
    display: flex;
    flex: none;
    align-items: center;
    height: 35px;
    padding-left: 22px;
    color: #fff;
    background: #404040;
}

.results strong {
    width: 142px;
    font-size: 18px;
}

.results .pane {
    flex: 1;
    margin-top: 3px;
}

table {
    width: 100%;
    border-collapse: collapse;
    table-layout: fixed;
}

th, td {
    padding: 0;
    font-weight: normal;
    text-align: left;
    overflow: hidden;
}

th {
    border-top: 2px solid #f2f0ec;
    border-bottom: 2px solid #7c7a76;
    line-height: 20px;
    background: #d4d0c8;
}

.computers th {
    padding-left: 10px;
}

.computers .name {
    width: 157px;
    border-right: 2px solid #7c7a76;
}

.computers .type {
    width: 250px;
}

.computers th svg {
    width: 14px;
    height: 14px;
    margin-left: 14px;
    fill: #8c8a86;
}

.computers td {
    height: 27px;
    padding-left: 10px;
}

.computers td:first-child {
    padding-left: 7px;
}

.computers td div {
    display: flex;
    align-items: center;
}

.computers td svg {
    width: 25px;
    height: 25px;
}

.computers td div span {
    flex: 1;
    padding-left: 3px;
    line-height: 27px;
}

.selected div span, .selected td:nth-child(2) {
    background: #d4d0c8;
}

.actions {
    width: 240px;
}

.actions h2 {
    height: 29px;
    padding-left: 9px;
    border-bottom: 3px solid #8c8a86;
    background: #d4d0c8;
    line-height: 27px;
}

.actions h3 {
    height: 39px;
    padding-left: 11px;
    color: #fff;
    background: linear-gradient(#b0cdf1, #13276b);
    font-size: 18px;
    line-height: 42px;
}

.actions a {
    height: 46px;
    padding-left: 50px;
    color: #000;
    line-height: 38px;
    text-decoration: none;
}

/* ---- properties dialog ---- */
.dialog {
    left: 942px;
    top: 85px;
    width: 736px;
    height: 870px;
    padding: 2px 3px;
}

.tabs {
    display: flex;
    flex: none;
    align-items: flex-end;
    gap: 2px;
    height: 33px;
    margin-top: 12px;
    padding-left: 13px;
}

.tab {
    width: 73px;
    height: 30px;
    padding: 0 6px;
    border: 2px solid;
    border-color: #fff #5e5e5e transparent #fff;
    border-radius: 4px 4px 0 0;
    background: #d4d0c8;
    text-align: left;
}

.tab.long {
    width: 94px;
}

.tab.on {
    position: relative;
    z-index: 1;
    width: 79px;
    height: 35px;
    margin: 0 -2px -2px;
    padding: 0 8px 4px;
}

.sheet {
    flex: 1;
    margin: 0 10px;
    padding: 15px 20px;
    border: 2px solid;
    border-color: #fff #5e5e5e #5e5e5e #fff;
}

.radios {
    display: flex;
    flex-direction: column;
    margin-top: 29px;
    padding-left: 2px;
}

.sheet label {
    display: flex;
    align-items: center;
    gap: 9px;
    height: 28px;
}

.radios .sub {
    padding-left: 30px;
}

input {
    flex: none;
    appearance: none;
    width: 18px;
    height: 18px;
    margin: 0;
    border: 2px solid;
    border-color: #707070 #fff #fff #707070;
    background: #fff;
}

input[type="radio"] {
    border-radius: 50%;
}

input[type="radio"]:checked {
    background: radial-gradient(#000 3px, #fff 4px);
}

.services {
    width: 563px;
    padding-left: 31px;
}

.listbox {
    height: 211px;
    margin-top: 4px;
}

.listbox .hscroll {
    margin-top: auto;
}

.listbox th {
    padding-left: 9px;
    border-right: 2px solid #8c8a86;
}

.listbox th:last-child {
    border-right: none;
}

.c1 { width: 125px; }
.c2 { width: 188px; }
.c3 { width: 126px; }

.listbox td {
    padding-left: 9px;
    background: #d4d0c8;
}

.listbox td:first-child {
    padding-left: 3px;
    border-left: 7px solid #fff;
}

.row {
    display: flex;
    gap: 12px;
    margin-top: 13px;
}

.row label {
    margin-right: auto;
}

.btn {
    width: 118px;
    height: 34px;
    line-height: 28px;
}

.btn.default {
    outline: 2px solid #000;
    outline-offset: -2px;
    border-width: 4px;
    border-color: #fff #505050 #505050 #fff;
    line-height: 24px;
}

.footer {
    display: flex;
    flex: none;
    justify-content: flex-end;
    gap: 10px;
    margin: 10px 10px 11px;
}

/* marked area over the delegation options */
.highlight {
    position: absolute;
    left: -3px;
    top: 188px;
    width: 724px;
    height: 483px;
    border: 6px solid #ed4127;
    border-radius: 10px;
    pointer-events: none;
}
```
